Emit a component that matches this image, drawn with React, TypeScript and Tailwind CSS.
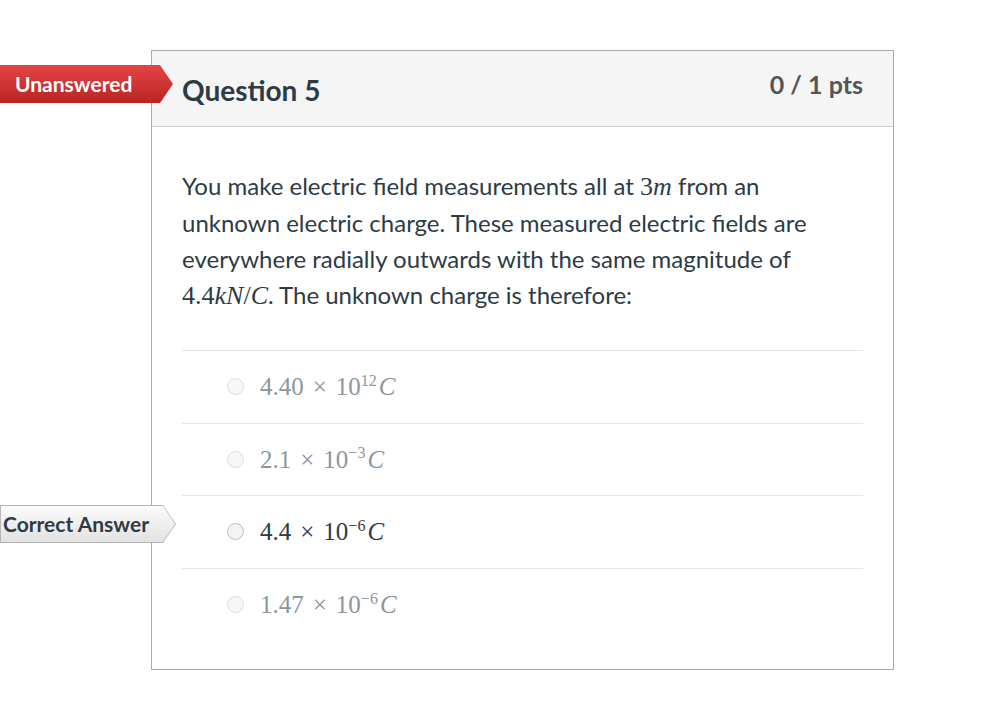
import React from "react";

const lato = { fontFamily: "Lato, 'Liberation Sans', sans-serif" };
const serif = { fontFamily: "'Liberation Serif', 'DejaVu Serif', serif" };

type Answer = { base: string; exp: string; correct?: boolean };

const answers: Answer[] = [
  { base: "4.40", exp: "12" },
  { base: "2.1", exp: "−3" },
  { base: "4.4", exp: "−6", correct: true },
  { base: "1.47", exp: "−6" },
];

function MathAnswer({ a }: { a: Answer }) {
  return (
    <span
      className={`text-[25px] leading-none ${a.correct ? "text-[#2d3b45]" : "text-[#8b969e]"}`}
      style={serif}
    >
      <span>{a.base}</span>
      <span className="mx-[9px]">×</span>
      <span>10</span>
      <sup className="top-[-0.6em] text-[16px]">{a.exp}</sup>
      <i className="ml-[2px]">C</i>
    </span>
  );
}

function Ribbon({ label, variant }: { label: string; variant: "red" | "gray" }) {
  const red = variant === "red";
  return (
    <div
      className={`relative flex h-[38px] items-center text-[21px] font-bold ${
        red
          ? "w-[173px] bg-gradient-to-b from-[#e54444] to-[#b92424] pl-[15px] text-white [clip-path:polygon(0_0,160px_0,173px_50%,160px_100%,0_100%)]"
          : "w-[176px] bg-[#b5b5b5] text-[#2d3b45] [clip-path:polygon(0_0,163px_0,176px_50%,163px_100%,0_100%)]"
      }`}
      style={lato}
    >
      {red ? (
        label
      ) : (
        <div className="absolute inset-[1px] flex items-center bg-gradient-to-b from-[#fbfbfb] to-[#e2e2e2] pl-[2px] [clip-path:polygon(0_0,162px_0,174px_50%,162px_100%,0_100%)]">
          {label}
        </div>
      )}
    </div>
  );
}

export default function App() {
  return (
    <div className="relative min-h-[724px] w-[997px] bg-white pt-[50px]" style={lato}>
      <div className="absolute left-0 top-[65px]">
        <Ribbon label="Unanswered" variant="red" />
      </div>
      <div className="absolute left-0 top-[505px]">
        <Ribbon label="Correct Answer" variant="gray" />
      </div>

      <div className="ml-[151px] w-[743px] border border-[#a9a9a9]">
        <div className="flex h-[76px] items-start justify-between border-b border-[#c7cdd1] bg-[#f5f5f5] px-[30px]">
          <h2 className="mt-[21px] text-[28px] font-bold leading-[36px] text-[#2d3b45]">Question 5</h2>
          <div className="mt-[17px] text-[25px] font-bold leading-[32px] text-[#555]">0 / 1 pts</div>
        </div>

        <div className="px-[30px] pb-[28px] pt-[41px]">
          <p className="max-w-[660px] text-[24px] leading-[36px] text-[#2d3b45]">
            You make electric field measurements all at{" "}
            <span className="text-[26px]" style={serif}>
              3<i>m</i>
            </span>{" "}
            from an unknown electric charge. These measured electric fields are everywhere radially outwards
            with the same magnitude of{" "}
            <span className="text-[26px]" style={serif}>
              4.4<i>kN</i>/<i>C</i>
            </span>
            . The unknown charge is therefore:
          </p>

          <div className="mt-[36px] border-t border-[#e6e6e6]">
            {answers.map((a, i) => (
              <div
                key={i}
                className={`flex h-[72.5px] items-center pl-[45px] ${i < answers.length - 1 ? "border-b border-[#e6e6e6]" : ""}`}
              >
                <span
                  className={`mr-[16px] h-[17px] w-[17px] shrink-0 rounded-full border ${
                    a.correct ? "border-[#bcbcbc] bg-[#f3f3f3]" : "border-[#dcdcdc] bg-[#f7f7f7]"
                  }`}
                />
                <MathAnswer a={a} />
              </div>
            ))}
          </div>
        </div>
      </div>
    </div>
  );
}
